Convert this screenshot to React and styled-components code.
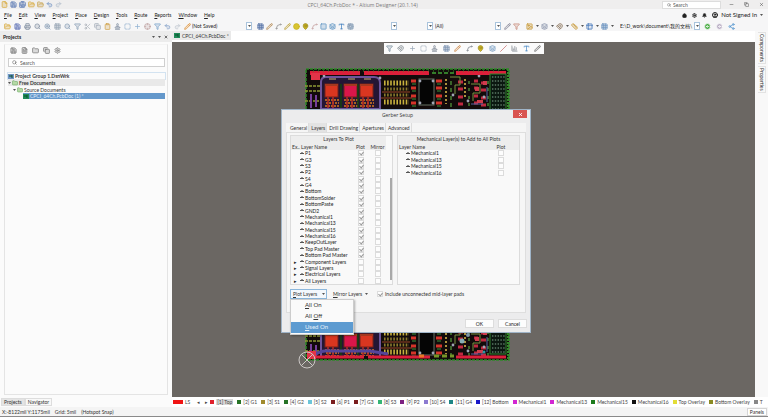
import React, { useState } from "react";
import styled, { createGlobalStyle } from "styled-components";
import {
  File, Save, SaveAll, FolderOpen, Folder, Undo2, Redo2, Printer, Search, Copy, Clipboard,
  Scissors, Stamp, BoxSelect, Plus, Filter, Crosshair, Pencil, Grid3x3, Spline, Circle, MapPin,
  Square, Layers, Type, Cpu, Home, Settings, Bell, CircleUser, Minus, X, Image, Share2, Ruler,
  Table2, Magnet, CircleArrowLeft, CircleArrowRight, FileText, Slash, ZoomIn, ChartColumn,
} from "lucide-react";

const GlobalStyle = createGlobalStyle`
  * { box-sizing: border-box; }
  body {
    margin: 0;
    overflow: hidden;
    font-family: Lato, "Noto Sans CJK SC", sans-serif;
    font-size: 5px;
    line-height: 6px;
    color: #333;
  }
  button, input, select {
    font: inherit;
    color: inherit;
    margin: 0;
    padding: 0;
    border: 0;
    background: none;
    white-space: nowrap;
  }
  a { color: inherit; text-decoration: none; }
  svg { display: block; flex: none; }
`;

const Page = styled.div`
  height: 100vh;
  display: flex;
  flex-direction: column;
  background: #fbfbfb;
`;

const TitleBar = styled.header`
  display: flex;
  align-items: center;
  height: 9px;
  background: #efeeee;
`;

const Title = styled.h1`
  flex: 1;
  margin: 0;
  text-align: center;
  font-family: "Open Sans", sans-serif;
  font-size: 5px;
  font-weight: 400;
  color: #777;
`;

const TitleSearch = styled.label`
  display: flex;
  align-items: center;
  gap: 2px;
  width: 59px;
  height: 8px;
  padding: 0 4px;
  background: #fff;
  border: 1px solid #ddd;

  input { width: 100%; min-width: 0; outline: none; }
  input::placeholder { color: #555; opacity: 1; }
`;

const WindowButtons = styled.div`
  display: flex;
  justify-content: space-between;
  padding: 0 4px 0 8px;
  width: 47px;
`;

const MenuBar = styled.nav`
  display: flex;
  align-items: center;
  height: 12px;
  padding: 0 5px 0 4px;
  gap: 7px;
  background: #f6f6f7;
  color: #222;

  a::first-letter { text-decoration: underline; }
`;

const Account = styled.div`
  margin-left: auto;
  display: flex;
  align-items: center;
  gap: 5px;
  color: #222;

  button { display: flex; align-items: center; gap: 3px; font-size: 6px; }
`;

const ToolBar = styled.div`
  display: flex;
  align-items: center;
  height: 10px;
  padding: 0 2px;
  background: #f6f6f7;
`;

const Tools = styled.div`
  display: flex;
  flex: none;
  margin-right: ${(p) => p.$after || 0}px;

  button {
    display: flex;
    align-items: center;
    justify-content: center;
    gap: 3px;
    width: ${(p) => p.$cell || 10}px;
    height: 8px;
  }
`;

const DropDown = styled.label`
  display: flex;
  align-items: center;
  width: ${(p) => p.$width}px;
  height: 8px;
  margin-right: ${(p) => p.$after || 2}px;

  select {
    flex: 1;
    min-width: 0;
    appearance: none;
    outline: none;
    color: #222;
  }
  span {
    display: flex;
    align-items: center;
    justify-content: center;
    width: 6px;
    height: 8px;
    border: 1px solid #a9c3dc;
    background: #fff;
  }
`;

const Main = styled.main`
  flex: 1;
  min-height: 0;
  display: flex;
`;

const Panel = styled.aside`
  width: 172px;
  flex: none;
  display: flex;
  flex-direction: column;
`;

const PanelHead = styled.div`
  display: flex;
  align-items: center;
  justify-content: space-between;
  height: 11px;
  padding: 0 4px 0 3px;
  background: #ececec;

  h2 { margin: 0; font-size: 5px; color: #222; }
  div { display: flex; align-items: center; gap: 3px; }
`;

const PanelBody = styled.div`
  flex: 1;
  margin: 2px 4px 2px;
  border: 1px solid #e4e4e4;
  border-top-color: #f4f4f4;
  padding: 1px 2px 0 3px;
`;

const PanelTools = styled.div`
  display: flex;
  height: 12px;
  align-items: flex-start;
`;

const PanelSearch = styled.label`
  display: flex;
  align-items: center;
  gap: 3px;
  height: 9px;
  padding: 0 3px;
  margin-bottom: 6px;
  background: #fff;
  border: 1px solid #cfcfcf;

  input { flex: 1; outline: none; }
  input::placeholder { color: #555; opacity: 1; }
`;

const Tree = styled.ul`
  list-style: none;
  margin: 0;
  padding: 0;
`;

const TreeRow = styled.li`
  display: flex;
  align-items: center;
  gap: 1px;
  height: ${(p) => (p.$tall ? 7 : 6)}px;
  padding-left: ${(p) => p.$depth * 5}px;
  font-weight: ${(p) => (p.$bold ? 700 : 400)};
  color: ${(p) => (p.$selected ? "#e6f0fa" : "#333")};
  background: ${(p) => (p.$selected ? "#6498cb" : p.$shaded ? "#e9e9e9" : "none")};
  background-clip: ${(p) => (p.$selected ? "content-box" : "border-box")};
  box-shadow: ${(p) => (p.$framed ? "0 0 0 1px #d3e3f1" : "none")};
  white-space: nowrap;
`;

const PanelTabs = styled.div`
  display: flex;
  height: 10px;
  padding: 0 1px;
  align-items: center;

  button {
    height: 8px;
    padding: 0 2px;
    border: 1px solid #ddd;
    background: #f8f8f8;
  }
  button:first-child { background: #e4e4e4; }
`;

const Workspace = styled.section`
  flex: 1;
  min-width: 0;
  display: flex;
  flex-direction: column;
`;

const DocTabs = styled.div`
  height: 11px;
  display: flex;
  align-items: flex-end;
  background: #fff;

  button {
    display: flex;
    align-items: center;
    gap: 2px;
    height: 9px;
    padding: 0 2px;
    background: #e9e9e9;
    margin-bottom: 2px;
  }
`;

const Canvas = styled.div`
  position: relative;
  flex: 1;
  background: #6b6763;
`;

const FloatingTools = styled.div`
  position: absolute;
  top: 1px;
  left: 50%;
  transform: translateX(-50%);
  display: flex;
  width: 160px;
  height: 11px;
  background: #fbfbfb;

  button {
    flex: 1;
    display: flex;
    align-items: center;
    justify-content: center;
  }
`;

const Board = styled.svg`
  position: absolute;
  left: 124px;
  top: 22px;
`;

const SideTabs = styled.div`
  width: 13px;
  padding: 1px 2px;
  display: flex;
  flex-direction: column;
  align-items: flex-end;
  gap: 2px;
  background: #f8f8f8;

  button {
    writing-mode: vertical-rl;
    padding: 1px 0;
    width: 8px;
    line-height: 6px;
    border: 1px solid #e2e2e2;
    border-left: 0;
  }
`;

const BottomRow = styled.div`
  display: flex;
`;

const LayerBar = styled.div`
  flex: 1;
  min-width: 0;
  display: flex;
  align-items: center;
  height: 10px;
  padding: 0 1px;
  background: #fff;
`;

const LayerStep = styled.button`
  width: 8px;
  flex: none;
  color: #444;
`;

const LayerTab = styled.button`
  flex: none;
  display: flex;
  align-items: center;
  gap: 2px;
  height: 8px;
  margin-right: 4px;
  color: #444;

  &::before {
    content: "";
    width: ${(p) => p.$swatch || 4}px;
    height: 4px;
    background: ${(p) => p.$color};
  }
  span { background: ${(p) => (p.$active ? "#d9d9d9" : "none")}; padding: 0 ${(p) => (p.$active ? 1 : 0)}px; }
`;

const StatusBar = styled.footer`
  display: flex;
  align-items: center;
  height: 10px;
  padding: 0 1px 0 2px;
  gap: 5px;
  background: #f4f4f4;
  border-bottom: 1px solid #8a8a8a;
  white-space: nowrap;

  button {
    margin-left: auto;
    height: 8px;
    padding: 0 2px;
    background: #fff;
    border: 1px solid #d5d5d5;
  }
`;

/* Gerber dialog */
const Dialog = styled.section`
  position: absolute;
  left: 109px;
  top: 67px;
  width: 250px;
  background: #ececed;
  border: 1px solid #9fb4c8;
`;

const DialogTitle = styled.header`
  display: flex;
  height: 13px;
  align-items: flex-start;
  padding-right: 3px;

  h2 {
    flex: 1;
    margin: 0;
    text-align: center;
    font-family: "Open Sans", sans-serif;
    font-size: 5px;
    line-height: 11px;
    font-weight: 400;
    color: #333;
  }
  button {
    width: 14px;
    height: 8px;
    display: flex;
    align-items: center;
    justify-content: center;
    background: #d9534f;
    color: #fff;
  }
`;

const DialogTabs = styled.div`
  display: flex;
  height: 9px;
  padding-left: 2px;
  background: #f5f5f5;
  margin: 0 4px;
`;

const DialogTab = styled.button`
  padding: 0 1px 0 2px;
  background: ${(p) => (p.$active ? "#e3e3e3" : "none")};
  border-right: 1px solid #ddd;
`;

const DialogBody = styled.div`
  margin: 0 4px;
  padding: 2px 5px 13px 3px;
  background: #f6f6f6;
  border: 1px solid #dedede;
`;

const Lists = styled.div`
  display: grid;
  grid-template-columns: 103px 1fr;
  gap: 4px;
`;

const ListBox = styled.div`
  display: flex;
  flex-direction: column;
  height: 150px;
  border: 1px solid #dcdcdc;
  background: #f9f9f9;
`;

const ListScroll = styled.div`
  display: flex;
  flex: 1;
  align-items: flex-start;
`;

const ScrollThumb = styled.div`
  flex: none;
  width: 2px;
  height: 102px;
  margin: 42px 0 0 4px;
  background: #a9a9a9;
`;

const LayerTable = styled.table`
  width: 100%;
  height: ${(p) => p.$height}px;
  border-collapse: collapse;
  table-layout: fixed;

  caption {
    height: 7px;
    background: #ededed;
    white-space: nowrap;
  }
  th {
    padding: 0 0 0 1px;
    height: 7px;
    font-weight: 400;
    text-align: left;
    background: #ededed;
    white-space: nowrap;
  }
  th.mark, td.mark { text-align: center; padding: 0; }
  td { padding: 0; white-space: nowrap; line-height: 6px; color: #222; }
  td span { display: flex; align-items: center; gap: 1px; padding-left: ${(p) => p.$indent || 0}px; }
  col.branch { width: 9px; }
  col.tick { width: 17px; }
  col.wide { width: 36px; }
`;

const Check = styled.input.attrs({ type: "checkbox" })`
  appearance: none;
  display: block;
  width: 6px;
  height: 6px;
  margin: 0 auto;
  border: 1px solid #dcdcdc;
  background: #fdfdfd;
  position: relative;

  &:checked::after {
    content: "";
    position: absolute;
    left: 1px;
    top: 0;
    width: 2px;
    height: 3px;
    border: solid #999;
    border-width: 0 1px 1px 0;
    transform: rotate(40deg);
  }
`;

const Options = styled.div`
  display: flex;
  align-items: center;
  gap: 3px;
  margin-top: 3px;
  height: 11px;

  label {
    display: flex;
    align-items: center;
    gap: 2px;
    margin-left: 4px;
  }
`;

const MenuHolder = styled.div`
  position: relative;
`;

const MenuButton = styled.button`
  display: flex;
  align-items: center;
  justify-content: space-between;
  width: ${(p) => p.$width}px;
  height: 10px;
  padding: 0 1px 0 2px;
  background: ${(p) => (p.$open ? "#f3f8fc" : "none")};
  border: 1px solid ${(p) => (p.$open ? "#8db8dc" : "transparent")};

  span::first-letter { text-decoration: underline; }
`;

const PopUp = styled.div`
  position: absolute;
  z-index: 2;
  top: 10px;
  left: 0;
  width: 64px;
  padding-bottom: 1px;
  background: #fafafa;
  border: 1px solid #ccc;
  box-shadow: 1px 1px 2px rgba(0, 0, 0, 0.3);
`;

const PopItem = styled.button`
  display: block;
  width: 100%;
  height: 11px;
  padding-left: 14px;
  text-align: left;
  font-size: 6px;
  color: ${(p) => (p.$active ? "#e7f1fa" : "#333")};
  background: ${(p) => (p.$active ? "#5d9bd1" : "none")};
`;

const DialogFoot = styled.footer`
  display: flex;
  justify-content: flex-end;
  gap: 4px;
  padding: 6px 3px 4px;

  button {
    width: 29px;
    height: 9px;
    background: #fdfdfd;
    border: 1px solid #ddd;
    color: #222;
  }
`;

const Caret = ({ color = "#555" }) => (
  <svg width="3" height="2" viewBox="0 0 3 2"><path d="M0 0h3L1.5 2z" fill={color} /></svg>
);

const fileTools = [
  [File, "#d9a93a"], [Save, "#5c7bb5"], [SaveAll, "#5c7bb5"], [FolderOpen, "#d9a93a"],
  [FolderOpen, "#c9a552"], [Undo2, "#7d9cc6"], [Redo2, "#b9c3cf"],
];

const mainTools = [
  [FolderOpen, "#d9a93a"], [Save, "#5c6fb5"], [Printer, "#8794a5"], [Search, "#8794a5"],
  [ZoomIn, "#8ca1b9"], [Grid3x3, "#9aa8b8"], [Search, "#8ca1b9"], [Filter, "#8ca1b9"],
  [Scissors, "#b3b9c0"], [Copy, "#a8b1bc"], [Clipboard, "#d2a44d"], [Stamp, "#8794a5"],
  [BoxSelect, "#84a5c8"], [Plus, "#8fb0d1"], [Crosshair, "#c2a8a8"], [Filter, "#7aa4cc"],
  [Undo2, "#8aa5cb"], [Redo2, "#c4cbd3"], [Pencil, "#e0953d"],
];

const drawTools = [
  [Grid3x3, "#5471a5"], [Pencil, "#b99059"], [Spline, "#999999"], [Pencil, "#bfa43c"],
  [Circle, "#c9b320", "#d8c432"], [MapPin, "#9c8b22", "#c9b320"], [Spline, "#ccaaaa"],
  [Square, "#5c93c2"], [Layers, "#5c93c2"], [Type, "#3f7fc0"], [Cpu, "#7d96b2"],
];

const reportTools = [
  [Image, "#c79631"], [Layers, "#8d96ad"], [Magnet, "#8c775f"], [Ruler, "#c79631"],
  [Table2, "#4779bd"], [Grid3x3, "#6b94bf"],
];

const overlayTools = [
  [Filter, "#7b8f9f"], [Magnet, "#8b9399"], [Plus, "#9aa8b8"], [BoxSelect, "#9aa8b8"],
  [Stamp, "#878f9c"], [Grid3x3, "#7d94b2"], [Pencil, "#cf8c4f"], [Spline, "#8a8f98"],
  [MapPin, "#9c8b22", "#d3bb28"], [Layers, "#7ba0c5"], [Slash, "#c76a6a"],
  [ChartColumn, "#8a8f98"], [Type, "#4f8cc7"], [Pencil, "#777777"],
];

const menus = ["File", "Edit", "View", "Project", "Place", "Design", "Tools", "Route", "Reports", "Window", "Help"];

const layers = [
  "P1", "G3", "S3", "P2", "S4", "G4", "Bottom", "BottomSolder", "BottomPaste", "GND2",
  "Mechanical1", "Mechanical13", "Mechanical15", "Mechanical16", "KeepOutLayer",
  "Top Pad Master", "Bottom Pad Master",
];
const groups = ["Component Layers", "Signal Layers", "Electrical Layers", "All Layers"];
const mechanical = ["Mechanical1", "Mechanical13", "Mechanical15", "Mechanical16"];

const layerTabs = [
  ["[2] G1", "#267326"], ["[3] S1", "#a08a2c"], ["[4] G2", "#267326"], ["[5] S2", "#6cc5d8"],
  ["[6] P1", "#7a1c1c"], ["[7] G3", "#7a1c1c"], ["[8] S3", "#35b575"], ["[9] P2", "#7c2080"],
  ["[10] S4", "#8c7ad0"], ["[11] G4", "#1c8585"], ["[12] Bottom", "#1818c8"],
  ["Mechanical1", "#d226d2"], ["Mechanical13", "#d226d2"], ["Mechanical15", "#1c7a1c"],
  ["Mechanical16", "#111"], ["Top Overlay", "#e3dd35"], ["Bottom Overlay", "#8a8a22"], ["T", "#888"],
];

function ToolIcon({ item }) {
  const [Icon, color, fill] = item;
  return <Icon size={7} strokeWidth={2.5} color={color} fill={fill || color} fillOpacity={fill ? 1 : 0.25} />;
}

function Icons({ items, $carets, ...rest }) {
  return (
    <Tools {...rest}>
      {items.map((item, i) => (
        <button key={i} aria-label={`Tool ${i + 1}`}>
          <ToolIcon item={item} />
          {$carets && <Caret />}
        </button>
      ))}
    </Tools>
  );
}

const LayerMark = () => (
  <svg width="4" height="3" viewBox="0 0 4 3"><path d="M0 1h4v1H0z" fill="#555" /><path d="M1 0h2v1H1z" fill="#999" /></svg>
);

const DocMark = ({ green = "#1f8a57" }) => (
  <svg width="6" height="5" viewBox="0 0 6 5"><path d="M0 0h6v5H0z" fill={green} /><path d="M1 2h3M4 1v3" stroke="#0c5233" /></svg>
);

const range = (n) => Array.from({ length: n }, (_, i) => i);

// one row of power parts, pads and chips, used at both board edges
function Parts() {
  return (
    <g>
      <path d="M24 13q0-5 5-5h48q6 0 6 6v26H24z" fill="#241634" stroke="#6c559b" strokeWidth="2" />
      <path d="M8 17h15M8 22h15M8 32h14" stroke="#8f9a36" strokeWidth="1.4" strokeDasharray="3 1" />
      <path d="M14 25v14M19 26v12" stroke="#75409a" strokeWidth="2" />
      {[[28, "#d93620"], [47, "#d9164a"], [63, "#d93620"]].map(([x, c]) => (
        <g key={x}>
          <path d={`M${x + 4} 10h7`} stroke="#c8b377" />
          <rect x={x} y="15" width="13" height="13" fill={c} stroke="#74221a" />
          <path d={`M${x} 15h13v2H${x}z`} fill="#a5381f" />
          <path d={`M${x} 31h14M${x + 1} 34h13M${x} 37h14`} stroke="#d77a1f" strokeWidth="1.5" strokeDasharray="2 1" />
          <path d={`M${x + 3} 28v11M${x + 8} 28v11`} stroke="#bb2b23" strokeWidth="1.5" />
        </g>
      ))}
      <path d="M44 15v24M61 15v24" stroke="#14430f" strokeWidth="1.5" />
      <path d="M87 14h25M87 33h25" stroke="#c9b23e" strokeWidth="5" strokeDasharray="1.6 1.5" />
      <path d="M87 20h25M87 26h25" stroke="#8b7b2d" strokeWidth="3" strokeDasharray="1.6 1.5" />
      <path d="M85 23h28M84 29h31" stroke="#9a4928" />
      {[12, 19, 27, 34].map((y) => (
        <g key={y}>
          <path d={`M114 ${y}h5M139 ${y}h6`} stroke="#d5342a" strokeWidth="3" />
          <path d={`M115 ${y + 3}h4M140 ${y + 3}h4`} stroke="#3b943b" />
          <path d={`M161 ${y + 1}h5M177 ${y}h4M184 ${y + 2}h5`} stroke="#bf2940" strokeWidth="3" />
          <path d={`M154 ${y}v4M172 ${y}v3M191 ${y}v3`} stroke="#55a13f" strokeWidth="1.2" />
        </g>
      ))}
      <rect x="122" y="10" width="15" height="26" fill="#050505" stroke="#667265" />
      <path d="M149 10v25M168 10v18" stroke="#ad913d" strokeWidth="2" strokeDasharray="2 2" />
      <path d="M153 8h10v8h-5v9M174 15h9v9h-7v8" fill="none" stroke="#789342" />
      <g fill="#a0a5b4">
        {[[27, 7], [83, 9], [123, 12], [136, 12], [123, 34], [136, 34], [156, 26], [171, 32], [182, 7], [187, 28]].map(([x, y]) => (
          <circle key={`${x}-${y}`} cx={x} cy={y} r="1.4" />
        ))}
      </g>
      <path d="M178 18h4v4h-4zM186 12h4v4h-4zM180 31h6v3h-6z" fill="#cf3c4d" />
      <path d="M174 35h12M190 18v15" stroke="#5664a6" />
    </g>
  );
}

function Pcb() {
  return (
    <Board width="220" height="314" viewBox="-8 -4 220 314">
      <rect x="2" y="1" width="203" height="291" fill="#120b0b" stroke="#2e8a28" strokeWidth="1.5" strokeDasharray="3 1" />
      <g transform="translate(-7 1)"><Parts /></g>
      <path d="M6 5h50M60 5h65M152 5h50" stroke="#dc1f3a" strokeWidth="4" />
      <path d="M9 3h190" stroke="#33952b" strokeDasharray="1 4" />
      <path d="M7 5h9v7H7z" fill="#e33448" />
      <path d="M128 5h22" stroke="#347c2a" strokeWidth="2" strokeDasharray="4 2" />
      <svg x="0" y="252" width="208" height="36" viewBox="0 0 208 36">
        <g transform="translate(-7 -1)"><Parts /></g>
      </svg>
      <circle cx="158" cy="273" r="2.5" fill="#86aeb5" />
      <circle cx="164" cy="267" r="2" fill="#7b96a7" />
      <circle cx="180" cy="284" r="1.5" fill="#2b96a2" />
      <path d="M12 286q6-4 16-3h38l18 3" fill="none" stroke="#55459a" strokeWidth="3" />
      <path d="M6 289h54M64 289h62M152 289h50" stroke="#dc1f3a" strokeWidth="3" />
      <path d="M3 283h9v8H3z" fill="#e33448" />
      <path d="M130 288h20" stroke="#769528" strokeWidth="3" strokeDasharray="5 3" />
      <path d="M115 288h5" stroke="#ec7625" strokeWidth="3" />
      {[6, 249].map((top) => (
        <g key={top}>
          <rect x="186" y={top} width="16" height="37" fill="#0b1710" stroke="#31842e" />
          {range(9).map((r) => (
            <path key={r} d={`M188 ${top + 3 + r * 4}h13`} stroke="#5b7964" strokeWidth="1.3" strokeDasharray="1.4 1.4" />
          ))}
        </g>
      ))}
      <path d="M204 1v291" stroke="#338829" strokeWidth="2" strokeDasharray="2 1" />
      <g fill="none" stroke="#cbc7c5" strokeWidth="1">
        <circle cx="3" cy="292" r="8" />
        <path d="M-3 286l12 12M9 286l-12 12" />
      </g>
    </Board>
  );
}

function LayersToPlot() {
  return (
    <ListBox>
      <ListScroll>
        <LayerTable $height={141}>
          <caption>Layers To Plot</caption>
          <colgroup>
            <col className="branch" />
            <col />
            <col className="tick" />
            <col className="tick" />
          </colgroup>
          <thead>
            <tr><th>Ex..</th><th>Layer Name</th><th className="mark">Plot</th><th className="mark">Mirror</th></tr>
          </thead>
          <tbody>
            {layers.map((name) => (
              <tr key={name}>
                <td />
                <td><span><LayerMark />{name}</span></td>
                <td className="mark"><Check defaultChecked aria-label={`Plot ${name}`} /></td>
                <td className="mark"><Check aria-label={`Mirror ${name}`} /></td>
              </tr>
            ))}
            {groups.map((name) => (
              <tr key={name}>
                <td className="mark">▸</td>
                <td><span><LayerMark />{name}</span></td>
                <td className="mark"><Check aria-label={`Plot ${name}`} /></td>
                <td className="mark"><Check aria-label={`Mirror ${name}`} /></td>
              </tr>
            ))}
          </tbody>
        </LayerTable>
        <ScrollThumb />
      </ListScroll>
    </ListBox>
  );
}

function MechanicalLayers() {
  return (
    <ListBox>
      <LayerTable $height={33} $indent={8}>
        <caption>Mechanical Layer(s) to Add to All Plots</caption>
        <colgroup>
          <col />
          <col className="wide" />
        </colgroup>
        <thead>
          <tr><th>Layer Name</th><th className="mark">Plot</th></tr>
        </thead>
        <tbody>
          {mechanical.map((name) => (
            <tr key={name}>
              <td><span><LayerMark />{name}</span></td>
              <td className="mark"><Check aria-label={`Add ${name}`} /></td>
            </tr>
          ))}
        </tbody>
      </LayerTable>
    </ListBox>
  );
}

function GerberSetup() {
  const [tab, setTab] = useState("Layers");
  const [open, setOpen] = useState(true);

  return (
    <Dialog role="dialog" aria-label="Gerber Setup">
      <DialogTitle>
        <h2>Gerber Setup</h2>
        <button aria-label="Close"><X size={5} strokeWidth={4} /></button>
      </DialogTitle>
      <DialogTabs>
        {["General", "Layers", "Drill Drawing", "Apertures", "Advanced"].map((name) => (
          <DialogTab key={name} $active={tab === name} onClick={() => setTab(name)}>{name}</DialogTab>
        ))}
      </DialogTabs>
      <DialogBody>
        <Lists>
          <LayersToPlot />
          <MechanicalLayers />
        </Lists>
        <Options>
          <MenuHolder>
            <MenuButton $width={37} $open={open} onClick={() => setOpen(!open)}><span>Plot Layers</span><Caret /></MenuButton>
            {open && (
              <PopUp>
                <PopItem><u>A</u>ll On</PopItem>
                <PopItem>All <u>O</u>ff</PopItem>
                <PopItem $active><u>U</u>sed On</PopItem>
              </PopUp>
            )}
          </MenuHolder>
          <MenuButton $width={40}><span>Mirror Layers</span><Caret /></MenuButton>
          <label><Check defaultChecked />Include unconnected mid-layer pads</label>
        </Options>
      </DialogBody>
      <DialogFoot>
        <button>OK</button>
        <button>Cancel</button>
      </DialogFoot>
    </Dialog>
  );
}

function Projects() {
  return (
    <Panel>
      <PanelHead>
        <h2>Projects</h2>
        <div><Caret /><Caret /><X size={4} strokeWidth={4} /></div>
      </PanelHead>
      <PanelBody>
        <PanelTools>
          <Icons items={[[Save, "#777"], [FileText, "#777"], [Folder, "#777"], [Copy, "#777"], [Settings, "#888"]]} $cell={11} />
        </PanelTools>
        <PanelSearch>
          <Search size={5} />
          <input aria-label="Search projects" placeholder="Search" />
        </PanelSearch>
        <Tree>
          <TreeRow $depth={0} $bold $framed><DocMark green="#6d93c2" />Project Group 1.DsnWrk</TreeRow>
          <TreeRow $depth={0} $tall $bold $shaded><Caret /><Folder size={6} color="#5ea157" fill="#b5d9a5" />Free Documents</TreeRow>
          <TreeRow $depth={1} $tall><Caret /><Folder size={6} color="#5ea157" fill="#b5d9a5" />Source Documents</TreeRow>
          <TreeRow $depth={3} $selected><DocMark />CPCI_64Ch.PcbDoc (1) *</TreeRow>
        </Tree>
      </PanelBody>
    </Panel>
  );
}

export default function App() {
  return (
    <Page>
      <GlobalStyle />
      <TitleBar>
        <Icons items={fileTools} $cell={9} />
        <Title>CPCI_64Ch.PcbDoc * - Altium Designer (20.1.14)</Title>
        <TitleSearch>
          <Search size={4} />
          <input aria-label="Search" placeholder="Search" />
        </TitleSearch>
        <WindowButtons>
          <button aria-label="Minimize"><Minus size={5} /></button>
          <button aria-label="Restore"><Copy size={5} /></button>
          <button aria-label="Close window"><X size={5} /></button>
        </WindowButtons>
      </TitleBar>
      <MenuBar>
        {menus.map((m) => <a key={m} href="#menu">{m}</a>)}
        <Account>
          <button aria-label="Home"><Home size={5} fill="#222" /></button>
          <button aria-label="Settings"><Settings size={5} strokeWidth={4} /></button>
          <button aria-label="Notifications"><Bell size={5} fill="#222" /></button>
          <button><CircleUser size={6} strokeWidth={4} />Not Signed In <Caret /></button>
        </Account>
      </MenuBar>
      <ToolBar>
        <Icons items={mainTools} />
        <DropDown $width={60} $after={4}>
          <select aria-label="Saved view"><option>(Not Saved)</option></select>
          <span><Caret /></span>
        </DropDown>
        <Icons items={drawTools} $cell={9} $after={36} />
        <DropDown $width={6} $after={30}><span><Caret /></span></DropDown>
        <DropDown $width={6} $after={2}><span><Caret /></span></DropDown>
        <DropDown $width={66} $after={2}>
          <select aria-label="Filter"><option>(All)</option></select>
          <span><Caret /></span>
        </DropDown>
        <Icons items={[[Pencil, "#888899"], [Filter, "#c98d7a"]]} $cell={9} $after={4} />
        <Icons items={reportTools} $cell={15} $carets $after={5} />
        <DropDown $width={80} $after={1}>
          <select aria-label="Path"><option>E:\D_work\document\我的文档\</option></select>
          <span><Caret /></span>
        </DropDown>
        <Icons items={[[CircleArrowLeft, "#fff", "#43a83c"], [CircleArrowRight, "#fff", "#b9aec4"], [Share2, "#5d9bd1"]]} $cell={12} />
      </ToolBar>
      <Main>
        <Projects />
        <Workspace>
          <DocTabs>
            <button><DocMark />CPCI_64Ch.PcbDoc *</button>
          </DocTabs>
          <Canvas>
            <Pcb />
            <FloatingTools>
              {overlayTools.map((item, i) => (
                <button key={i} aria-label={`Canvas tool ${i + 1}`}><ToolIcon item={item} /></button>
              ))}
            </FloatingTools>
            <GerberSetup />
          </Canvas>
        </Workspace>
        <SideTabs>
          <button>Components</button>
          <button>Properties</button>
        </SideTabs>
      </Main>
      <BottomRow>
        <Panel as="div"><PanelTabs><button>Projects</button><button>Navigator</button></PanelTabs></Panel>
        <LayerBar>
          <LayerTab $color="#f01414" $swatch={10}>LS</LayerTab>
          <LayerStep aria-label="Previous layer">◂</LayerStep>
          <LayerStep aria-label="Next layer">▸</LayerStep>
          <LayerTab $color="#e0202c" $active><span>[1] Top</span></LayerTab>
          {layerTabs.map(([name, color]) => <LayerTab key={name} $color={color}>{name}</LayerTab>)}
        </LayerBar>
      </BottomRow>
      <StatusBar>
        <span>X:-8122mil Y:1175mil</span>
        <span>Grid: 5mil</span>
        <span>(Hotspot Snap)</span>
        <button>Panels</button>
      </StatusBar>
    </Page>
  );
}
